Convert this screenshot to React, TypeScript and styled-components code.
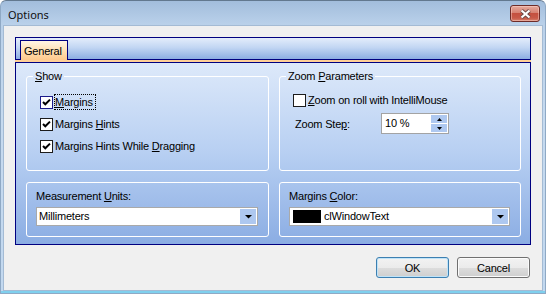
import React from "react";
import styled, { createGlobalStyle } from "styled-components";

const GlobalStyle = createGlobalStyle`
  html, body { margin: 0; padding: 0; background: #ffffff; }
  body {
    font-family: "Liberation Sans", Arial, sans-serif;
    font-size: 11px;
    letter-spacing: -0.2px;
    color: #000;
  }
  * { box-sizing: border-box; }
`;

const Window = styled.div`
  width: 546px;
  height: 294px;
  display: flex;
  flex-direction: column;
  border: 1px solid #8fa9c5;
  border-top-color: #62788f;
  border-radius: 6px 6px 0 0;
  padding: 0 2px 2px 2px;
  background: linear-gradient(to bottom, #a2bddc 0px, #bad1ea 24px, #c6daef 40%, #c2d8ef 100%);
  box-shadow: inset 0 -2px 0 #7fd0ee;
  overflow: hidden;
`;

const TitleBar = styled.div`
  height: 24px;
  flex: none;
  display: flex;
  align-items: center;
  justify-content: space-between;
  padding: 1px 3px 0 5px;
`;

const Title = styled.span`
  font-family: "Noto Sans", "Open Sans", sans-serif;
  font-size: 11px;
  letter-spacing: 0;
  color: #111;
  padding-top: 1px;
`;

const CloseButton = styled.div`
  width: 30px;
  height: 17px;
  border: 1px solid #6e2c28;
  border-radius: 3px;
  display: flex;
  align-items: center;
  justify-content: center;
  background: linear-gradient(to bottom, #e6aa9d 0%, #d78272 45%, #c4503f 50%, #c85a48 80%, #d7826e 100%);
  box-shadow: inset 0 0 0 1px rgba(255, 220, 210, 0.45);
`;

const Client = styled.div`
  flex: 1;
  min-height: 0;
  background: #f0f0f0;
  border: 1px solid #a4bbd4;
  padding: 11px 11px 12px 11px;
  display: flex;
  flex-direction: column;
`;

const PageControl = styled.div`
  height: 208px;
  flex: none;
  display: flex;
  flex-direction: column;
`;

const TabStrip = styled.div`
  height: 23px;
  flex: none;
  border: 1px solid #000080;
  padding: 2px 0 0 4px;
  display: flex;
  align-items: flex-end;
  background: linear-gradient(to bottom, #e3edfb 0%, #c2d6f3 45%, #8caee2 100%);
`;

const Tab = styled.div`
  position: relative;
  z-index: 1;
  width: 48px;
  height: 20px;
  margin-bottom: -1px;
  border: 1px solid #000080;
  border-bottom: none;
  padding: 1px 0 0 3px;
  display: flex;
  align-items: center;
  background: linear-gradient(to bottom, #fff5e6 0%, #ffe0b4 50%, #ffc98c 100%);
`;

const TabSeparator = styled.div`
  height: 2px;
  flex: none;
  background: #ffcf97;
`;

const Panel = styled.div`
  flex: 1;
  min-height: 0;
  border: 1px solid #000080;
  background: linear-gradient(to bottom, #dde9fa 0%, #b7cff2 50%, #8badE3 100%);
  display: grid;
  grid-template-columns: 243px 242px;
  grid-template-rows: 101px 55px;
  column-gap: 10px;
  row-gap: 11px;
  padding: 7px 9px 7px 10px;
`;

const GroupBox = styled.fieldset`
  margin: 0;
  padding: 0;
  min-width: 0;
  border: 1px solid #ffffff;
  border-radius: 3px;
`;

const GroupLegend = styled.legend`
  margin-left: 6px;
  padding: 0 2px;
  line-height: 13px;
  font-size: 11px;
`;

const PlainGroup = styled.div`
  border: 1px solid #ffffff;
  border-radius: 3px;
  padding: 7px 10px 0 9px;
  display: flex;
  flex-direction: column;
  gap: 4px;
`;

const GroupBody = styled.div<{ $top: number; $gap: number }>`
  display: flex;
  flex-direction: column;
  align-items: flex-start;
  padding: ${(p) => p.$top}px 0 0 13px;
  gap: ${(p) => p.$gap}px;
`;

const CheckRow = styled.div`
  height: 18px;
  display: flex;
  align-items: center;
`;

const CheckSvg = styled.svg`
  flex: none;
  display: block;
`;

const CheckLabel = styled.span<{ $focused?: boolean }>`
  margin-left: 1px;
  padding: 0 2px 0 0;
  line-height: 14px;
  border: 1px dotted ${(p) => (p.$focused ? "#000" : "transparent")};
  white-space: nowrap;
`;

const Mn = styled.span`
  text-decoration: underline;
  text-underline-offset: 1px;
`;

const StepRow = styled.div`
  display: flex;
  align-items: center;
  margin-left: 2px;
`;

const StepLabel = styled.span`
  width: 86px;
  line-height: 14px;
`;

const SpinEdit = styled.div`
  width: 68px;
  height: 21px;
  border: 1px solid #a3a3a3;
  background: #fff;
  padding: 1px;
  display: flex;
`;

const SpinText = styled.span`
  flex: 1;
  padding-left: 2px;
  line-height: 17px;
`;

const SpinButtons = styled.div`
  width: 16px;
  display: flex;
  flex-direction: column;
  gap: 1px;
`;

const SpinButton = styled.div`
  flex: 1;
  background: #aec8f0;
  display: flex;
  align-items: center;
  justify-content: center;
`;

const FieldLabel = styled.span`
  line-height: 13px;
`;

const Combo = styled.div`
  height: 19px;
  border: 1px solid #a9a9a9;
  background: #fff;
  padding: 1px;
  display: flex;
  align-items: stretch;
`;

const ComboText = styled.span`
  flex: 1;
  padding-left: 1px;
  line-height: 15px;
  display: flex;
  align-items: center;
`;

const ColorSwatch = styled.span`
  width: 28px;
  height: 13px;
  margin: 0 3px 0 1px;
  background: #000;
`;

const DropButton = styled.div`
  width: 16px;
  background: #aec8f0;
  display: flex;
  align-items: center;
  justify-content: center;
`;

const ButtonRow = styled.div`
  margin-top: 12px;
  margin-right: 1px;
  display: flex;
  justify-content: flex-end;
  gap: 8px;
`;

const DialogButton = styled.button<{ $default?: boolean }>`
  width: 73px;
  height: 21px;
  padding: 0;
  font-family: "Liberation Sans", Arial, sans-serif;
  font-size: 11px;
  letter-spacing: -0.2px;
  color: #000;
  border: 1px solid ${(p) => (p.$default ? "#3c7fb1" : "#707070")};
  border-radius: 3px;
  background: linear-gradient(to bottom, #f2f2f2 0%, #ebebeb 50%, #dddddd 51%, #cfcfcf 100%);
  box-shadow: inset 0 0 0 1px ${(p) => (p.$default ? "#bfe3f8" : "#fbfbfb")};
`;

const DownArrow = () => (
  <svg width="7" height="4" viewBox="0 0 7 4">
    <polygon points="0,0 7,0 3.5,3.5" fill="#000" />
  </svg>
);

const UpArrow = () => (
  <svg width="5" height="3" viewBox="0 0 5 3">
    <polygon points="0,3 5,3 2.5,0" fill="#000" />
  </svg>
);

const SmallDown = () => (
  <svg width="5" height="3" viewBox="0 0 5 3">
    <polygon points="0,0 5,0 2.5,3" fill="#000" />
  </svg>
);

const CheckBox = ({ checked, focused }: { checked: boolean; focused?: boolean }) => (
  <CheckSvg width="13" height="13" viewBox="0 0 13 13">
    <rect x="0.5" y="0.5" width="12" height="12" fill="#fff" stroke={focused ? "#1b1b8a" : "#1c1c1c"} />
    {checked && <path d="M3 6 L5.3 8.3 L10 3.6" fill="none" stroke="#000" strokeWidth="2" />}
  </CheckSvg>
);

const CheckItem = ({
  checked,
  focused,
  children,
}: {
  checked: boolean;
  focused?: boolean;
  children: React.ReactNode;
}) => (
  <CheckRow>
    <CheckBox checked={checked} focused={focused} />
    <CheckLabel $focused={focused}>{children}</CheckLabel>
  </CheckRow>
);

export default function App() {
  return (
    <>
      <GlobalStyle />
      <Window>
        <TitleBar>
          <Title>Options</Title>
          <CloseButton>
            <svg width="13" height="10" viewBox="0 0 13 10">
              <path d="M2.5 1.5 L10.5 8.5 M10.5 1.5 L2.5 8.5" stroke="#6b4a48" strokeWidth="4" />
              <path d="M2.5 1.5 L10.5 8.5 M10.5 1.5 L2.5 8.5" stroke="#ffffff" strokeWidth="2.2" />
            </svg>
          </CloseButton>
        </TitleBar>
        <Client>
          <PageControl>
            <TabStrip>
              <Tab>General</Tab>
            </TabStrip>
            <TabSeparator />
            <Panel>
              <GroupBox>
                <GroupLegend>
                  <Mn>S</Mn>how
                </GroupLegend>
                <GroupBody $top={10} $gap={4}>
                  <CheckItem checked focused>
                    <Mn>M</Mn>argins
                  </CheckItem>
                  <CheckItem checked>
                    Margins <Mn>H</Mn>ints
                  </CheckItem>
                  <CheckItem checked>
                    Margins Hints While <Mn>D</Mn>ragging
                  </CheckItem>
                </GroupBody>
              </GroupBox>
              <GroupBox>
                <GroupLegend>
                  Zoom <Mn>P</Mn>arameters
                </GroupLegend>
                <GroupBody $top={8} $gap={4}>
                  <CheckItem checked={false}>
                    <Mn>Z</Mn>oom on roll with IntelliMouse
                  </CheckItem>
                  <StepRow>
                    <StepLabel>
                      Zoom Ste<Mn>p</Mn>:
                    </StepLabel>
                    <SpinEdit>
                      <SpinText>10 %</SpinText>
                      <SpinButtons>
                        <SpinButton>
                          <UpArrow />
                        </SpinButton>
                        <SpinButton>
                          <SmallDown />
                        </SpinButton>
                      </SpinButtons>
                    </SpinEdit>
                  </StepRow>
                </GroupBody>
              </GroupBox>
              <PlainGroup>
                <FieldLabel>
                  Measurement <Mn>U</Mn>nits:
                </FieldLabel>
                <Combo>
                  <ComboText>Millimeters</ComboText>
                  <DropButton>
                    <DownArrow />
                  </DropButton>
                </Combo>
              </PlainGroup>
              <PlainGroup>
                <FieldLabel>
                  Margins <Mn>C</Mn>olor:
                </FieldLabel>
                <Combo>
                  <ComboText>
                    <ColorSwatch />
                    clWindowText
                  </ComboText>
                  <DropButton>
                    <DownArrow />
                  </DropButton>
                </Combo>
              </PlainGroup>
            </Panel>
          </PageControl>
          <ButtonRow>
            <DialogButton $default>OK</DialogButton>
            <DialogButton>Cancel</DialogButton>
          </ButtonRow>
        </Client>
      </Window>
    </>
  );
}
